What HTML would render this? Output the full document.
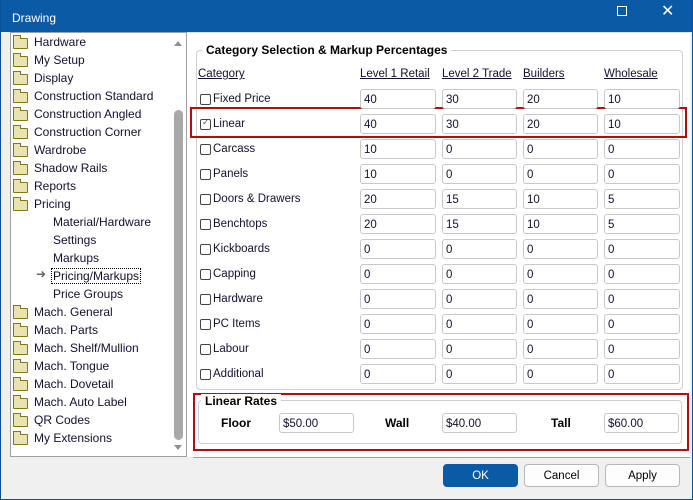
<!DOCTYPE html>
<html><head><style>
*{box-sizing:border-box;margin:0;padding:0}
body{width:693px;height:500px;background:#f0f0f0;font-family:"Liberation Sans",sans-serif;font-size:12px;color:#000;position:relative;overflow:hidden}
.abs{position:absolute}
.title{left:0;top:0;width:693px;height:32px;background:#0b5aa6;color:#fff;font-size:12px}
.frame{left:0;top:0;width:693px;height:500px;border:1px solid #0b4f94;border-top:none}
.tree{left:10px;top:32px;width:177px;height:425px;background:#fff;border:1px solid #a0a0a0}
.ti{position:absolute;left:24px;color:#101030;white-space:nowrap}
.fold{position:absolute;left:3px;width:15px;height:11px;background:#e8e3b0;border:1px solid #7e7a10;border-radius:1px}
.fold:before{content:"";position:absolute;left:-1px;top:-4px;width:6px;height:3px;border:1px solid #7e7a10;border-bottom:none;background:#e8e3b0}
.panel{left:187px;top:32px;width:503px;height:425px;background:#fff;border-top:1px solid #e0e0e0}
.gb{border:1px solid #d0d0d0;border-radius:4px}
.leg{background:#fff;padding:0 4px;font-weight:bold;font-size:12px}
.hd{text-decoration:underline;color:#101030;font-size:11.5px}
.in{position:absolute;height:20px;border:1px solid #c8c8c8;border-radius:3px;background:#fff;padding:4px 3px 0;color:#101030;font-size:11.5px;line-height:13px}
.cb{position:absolute;left:200px;width:11px;height:11px;border:1px solid #444;border-radius:2px;background:#fff}
.lab{position:absolute;left:213px;color:#101030;font-size:11.5px}
.red{border:2px solid #b30d0d}
.btn{position:absolute;top:464px;width:75px;height:23px;border:1px solid #b8b8b8;border-radius:4px;background:#fdfdfd;text-align:center;line-height:22px;font-size:11.5px}
</style></head><body>
<div class="abs title"><span class="abs" style="left:12px;top:11px">Drawing</span>
<span class="abs" style="left:617px;top:6px;width:10px;height:10px;border:1px solid #fff"></span>
<span class="abs" style="left:661px;top:1px;font-size:16px;font-weight:lighter">✕</span></div>
<div class="abs tree">
<div class="abs" style="left:161px;top:0;width:14px;height:423px;background:#fff"></div>
<div class="abs" style="left:163px;top:77px;width:9px;height:330px;background:#a8a8a8;border-radius:5px"></div>
<div class="abs" style="left:163px;top:8px;width:0;height:0;border:4px solid transparent;border-bottom:5px solid #909090;border-top:none"></div>
<div class="abs" style="left:163px;top:412px;width:0;height:0;border:4px solid transparent;border-top:5px solid #909090;border-bottom:none"></div>
</div>
<div class="abs" style="left:10px;top:33px;width:160px;height:425px">
<div style="position:relative">
<div class="fold" style="top:5px"></div><div class="ti" style="top:2px">Hardware</div>
<div class="fold" style="top:23px"></div><div class="ti" style="top:20px">My Setup</div>
<div class="fold" style="top:41px"></div><div class="ti" style="top:38px">Display</div>
<div class="fold" style="top:59px"></div><div class="ti" style="top:56px">Construction Standard</div>
<div class="fold" style="top:77px"></div><div class="ti" style="top:74px">Construction Angled</div>
<div class="fold" style="top:95px"></div><div class="ti" style="top:92px">Construction Corner</div>
<div class="fold" style="top:113px"></div><div class="ti" style="top:110px">Wardrobe</div>
<div class="fold" style="top:131px"></div><div class="ti" style="top:128px">Shadow Rails</div>
<div class="fold" style="top:149px"></div><div class="ti" style="top:146px">Reports</div>
<div class="fold" style="top:167px"></div><div class="ti" style="top:164px">Pricing</div>
<div class="ti" style="top:182px;left:43px">Material/Hardware</div>
<div class="ti" style="top:200px;left:43px">Settings</div>
<div class="ti" style="top:218px;left:43px">Markups</div>
<div class="ti" style="top:234px;left:26px;color:#666;font-size:12px">➜</div>
<div class="ti" style="top:235px;left:41px;border:1px dotted #000;padding:0 1px">Pricing/Markups</div>
<div class="ti" style="top:254px;left:43px">Price Groups</div>
<div class="fold" style="top:275px"></div><div class="ti" style="top:272px">Mach. General</div>
<div class="fold" style="top:293px"></div><div class="ti" style="top:290px">Mach. Parts</div>
<div class="fold" style="top:311px"></div><div class="ti" style="top:308px">Mach. Shelf/Mullion</div>
<div class="fold" style="top:329px"></div><div class="ti" style="top:326px">Mach. Tongue</div>
<div class="fold" style="top:347px"></div><div class="ti" style="top:344px">Mach. Dovetail</div>
<div class="fold" style="top:365px"></div><div class="ti" style="top:362px">Mach. Auto Label</div>
<div class="fold" style="top:383px"></div><div class="ti" style="top:380px">QR Codes</div>
<div class="fold" style="top:401px"></div><div class="ti" style="top:398px">My Extensions</div>
</div></div>
<div class="abs panel"></div>
<div class="abs gb" style="left:196px;top:50px;width:487px;height:340px"></div>
<div class="abs leg" style="left:202px;top:43px">Category Selection &amp; Markup Percentages</div>
<div class="abs hd" style="left:198px;top:68px">Category</div>
<div class="abs hd" style="left:360px;top:68px">Level 1 Retail</div>
<div class="abs hd" style="left:442px;top:68px">Level 2 Trade</div>
<div class="abs hd" style="left:523px;top:68px">Builders</div>
<div class="abs hd" style="left:604px;top:68px">Wholesale</div>
<div class="abs red" style="left:190px;top:107px;width:497px;height:31px"></div>
<div id="rows"></div>
<div class="abs red" style="left:193px;top:393px;width:496px;height:58px"></div>
<div class="abs gb" style="left:198px;top:400px;width:484px;height:44px"></div>
<div class="abs leg" style="left:201px;top:394px">Linear Rates</div>
<div class="abs" style="left:221px;top:416px;font-weight:bold;font-size:12px">Floor</div>
<div class="abs" style="left:385px;top:416px;font-weight:bold;font-size:12px">Wall</div>
<div class="abs" style="left:551px;top:416px;font-weight:bold;font-size:12px">Tall</div>
<div class="in" style="left:279px;top:413px;width:75px">$50.00</div>
<div class="in" style="left:442px;top:413px;width:75px">$40.00</div>
<div class="in" style="left:604px;top:413px;width:75px">$60.00</div>
<div class="abs" style="left:193px;top:457px;width:497px;height:1px;background:#a0a0a0"></div>
<div class="btn" style="left:443px;background:#0b5aa6;color:#fff;border-color:#0b5aa6">OK</div>
<div class="btn" style="left:524px">Cancel</div>
<div class="btn" style="left:605px">Apply</div>
<div class="abs frame"></div>
<script>
var d=[["Fixed Price",40,30,20,10],["Linear",40,30,20,10],["Carcass",10,0,0,0],["Panels",10,0,0,0],["Doors & Drawers",20,15,10,5],["Benchtops",20,15,10,5],["Kickboards",0,0,0,0],["Capping",0,0,0,0],["Hardware",0,0,0,0],["PC Items",0,0,0,0],["Labour",0,0,0,0],["Additional",0,0,0,0]];
var h="",xs=[360,442,523,604];
d.forEach(function(r,i){var y=89+i*25;
h+='<div class="cb" style="top:'+(y+5)+'px">'+(i==1?'<span style="position:absolute;left:1px;top:-3px;font-size:9px;color:#555">✓</span>':'')+'</div><div class="lab" style="top:'+(y+4)+'px">'+r[0].replace("&","&amp;")+'</div>';
for(var k=0;k<4;k++)h+='<div class="in" style="left:'+xs[k]+'px;top:'+y+'px;width:'+(k==0||k==3?76:75)+'px">'+r[k+1]+'</div>';});
document.getElementById("rows").outerHTML=h;
</script>
</body></html>
